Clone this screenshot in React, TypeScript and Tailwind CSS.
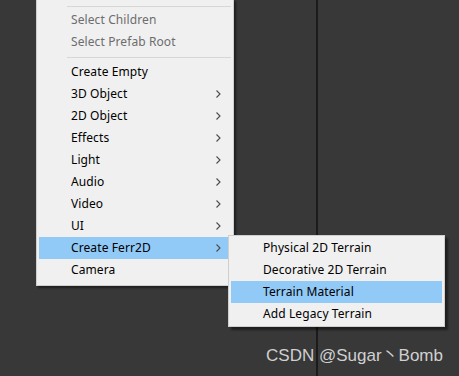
import React from 'react'

const font = { fontFamily: "'Noto Sans', 'Microsoft YaHei', sans-serif" }

function Chevron() {
  return (
    <svg width="5" height="8" viewBox="0 0 5 8" className="shrink-0">
      <polyline points="0.5,0.5 4,4 0.5,7.5" fill="none" stroke="#4a4a4a" strokeWidth="1.1" />
    </svg>
  )
}

function Item({ label, sub, disabled, active }: { label: string; sub?: boolean; disabled?: boolean; active?: boolean }) {
  return (
    <div className={`h-[22px] flex items-center pl-[32px] pr-[10px] ${active ? 'bg-[#91c9f7]' : ''}`}>
      <span className={`flex-1 text-[12px] leading-none tracking-[0.1px] ${disabled ? 'text-[#6d6d6d]' : 'text-[#000]'}`}>{label}</span>
      {sub && <Chevron />}
    </div>
  )
}

const items = [
  { label: 'Create Empty' },
  { label: '3D Object', sub: true },
  { label: '2D Object', sub: true },
  { label: 'Effects', sub: true },
  { label: 'Light', sub: true },
  { label: 'Audio', sub: true },
  { label: 'Video', sub: true },
  { label: 'UI', sub: true },
]

const subItems = ['Physical 2D Terrain', 'Decorative 2D Terrain', 'Terrain Material', 'Add Legacy Terrain']

export default function App() {
  return (
    <div className="relative w-[459px] h-[376px] overflow-hidden bg-[#383838] flex" style={font}>
      <div className="w-[316px]" />
      <div className="w-[2px] bg-[#1b1b1b]" />
      <div className="flex-1" />

      {/* main context menu */}
      <div className="absolute left-[36px] top-[-1px] w-[198px] bg-[#f0f0f0] border border-[#cfcfcf] px-[2px] pb-[4px] shadow-[2px_2px_2px_rgba(0,0,0,0.45)]">
        <div className="h-[9px] pt-[6px] pl-[28px]">
          <div className="h-px bg-[#d7d7d7]" />
        </div>
        <Item label="Select Children" disabled />
        <Item label="Select Prefab Root" disabled />
        <div className="h-[8px] pt-[4px] pl-[28px]">
          <div className="h-px bg-[#d7d7d7]" />
        </div>
        {items.map((it) => (
          <Item key={it.label} label={it.label} sub={it.sub} />
        ))}
        <div className="relative">
          <Item label="Create Ferr2D" sub active />
          {/* submenu */}
          <div className="absolute left-[189px] top-[-2px] w-[217px] bg-[#f0f0f0] border border-[#cfcfcf] px-[2px] py-[1px] shadow-[3px_3px_2px_rgba(0,0,0,0.45)]">
            {subItems.map((s) => (
              <Item key={s} label={s} active={s === 'Terrain Material'} />
            ))}
          </div>
        </div>
        <Item label="Camera" />
      </div>

      <div className="absolute right-[16px] top-[347px] text-[17px] leading-none text-[#d0d0d0]" style={{ fontFamily: "'Liberation Sans', 'Noto Sans CJK SC', sans-serif" }}>
        CSDN @Sugar丶Bomb
      </div>
    </div>
  )
}
